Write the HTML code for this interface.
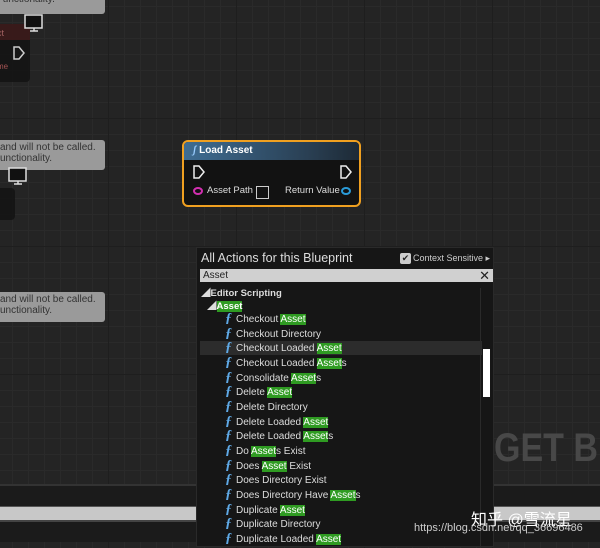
<!DOCTYPE html>
<html><head><meta charset="utf-8"><style>
*{margin:0;padding:0;box-sizing:border-box}
body{width:600px;height:542px;overflow:hidden;position:relative;background:#242424;font-family:"Liberation Sans","Noto Sans CJK SC",sans-serif;
background-image:linear-gradient(#1e1e1e 1px,transparent 1px),linear-gradient(90deg,#1e1e1e 1px,transparent 1px),linear-gradient(#2a2a2a 1px,transparent 1px),linear-gradient(90deg,#2a2a2a 1px,transparent 1px);
background-size:128px 128px,128px 128px,16px 16px,16px 16px;background-position:-20px -10px,-20px -10px,-4px 6px,-4px 6px}
.abs{position:absolute}
.cm{position:absolute;left:-5px;width:110px;background:#9a9a9a;border-radius:3px;color:#333;font-size:10px;line-height:11px;padding:2px 0 0 5px}
.node{position:absolute;background:#111;border-radius:4px;opacity:.95}
.panel{position:absolute;left:196px;top:247px;width:298px;height:300px;background:#161616;border:1px solid #2a2a2a}
.row{position:absolute;left:28px;height:14px;font-size:10px;color:#ddd;line-height:14px;white-space:nowrap}
.row i{font-family:"Liberation Serif",serif;color:#5fa9e6;font-size:14px;font-style:italic;font-weight:bold;margin-right:4px;display:inline-block;width:7px}
.g{background:#2f9b22;color:#fff}
</style></head><body>
<div class="cm" style="top:-8px;height:22px">&nbsp;unctionality.</div>
<div class="node" style="left:-5px;top:24px;width:35px;height:58px;background:#151515"><div style="background:#3a1a1a;height:16px;color:#a66;font-size:9px;padding:4px 0 0 2px">ct</div><div style="color:#a55;font-size:8px;margin-top:22px;padding-left:2px">me</div></div>
<svg class="abs" style="left:13px;top:46px" width="12" height="14"><path d="M1 1H6L11 7L6 13H1Z" fill="none" stroke="#ccc" stroke-width="1.5"/></svg>
<svg class="abs" style="left:22px;top:14px" width="22" height="20"><rect x="3" y="1" width="17" height="13" fill="#111" stroke="#ddd" stroke-width="1.5"/><path d="M8 17H16M12 14V17" stroke="#ddd" stroke-width="1.5"/></svg>
<div class="cm" style="top:140px;height:30px">and will not be called.<br>unctionality.</div>
<svg class="abs" style="left:6px;top:167px" width="22" height="20"><rect x="3" y="1" width="17" height="13" fill="#111" stroke="#ddd" stroke-width="1.5"/><path d="M8 17H16M12 14V17" stroke="#ddd" stroke-width="1.5"/></svg>
<div class="node" style="left:-5px;top:188px;width:20px;height:32px;background:#151515"></div>
<div class="cm" style="top:292px;height:30px">and will not be called.<br>unctionality.</div>
<div class="abs" style="left:182px;top:140px;width:179px;height:67px;border:2px solid #f0a020;border-radius:6px;background:#121212">
<div style="height:18px;background:linear-gradient(90deg,#3f6d93,#2a4054 70%,#1d2a36);border-radius:4px 4px 0 0;color:#fff;font-size:10px;font-weight:bold;line-height:18px;padding-left:9px"><i style="font-family:'Liberation Serif';color:#9cf">ʃ</i> Load Asset</div>
<svg class="abs" style="left:9px;top:23px" width="12" height="14"><path d="M1 1H6L11 7L6 13H1Z" fill="none" stroke="#eee" stroke-width="1.5"/></svg>
<svg class="abs" style="left:156px;top:23px" width="12" height="14"><path d="M1 1H6L11 7L6 13H1Z" fill="none" stroke="#eee" stroke-width="1.5"/></svg>
<div class="abs" style="left:9px;top:45px;width:10px;height:8px;border:2px solid #d22fb0;border-radius:50%"></div>
<div class="abs" style="left:23px;top:43px;font-size:9.5px;color:#ddd">Asset Path</div>
<div class="abs" style="left:72px;top:44px;width:13px;height:13px;border:1.5px solid #ccc"></div>
<div class="abs" style="left:101px;top:43px;font-size:9.5px;color:#ddd">Return Value</div>
<div class="abs" style="left:157px;top:45px;width:10px;height:8px;border:2px solid #2a9bd8;border-radius:50%"></div>
</div>
<div class="abs" style="left:494px;top:426px;font-size:40px;line-height:44px;font-weight:bold;color:#484848;white-space:nowrap;transform:scaleX(0.85);transform-origin:left">GET B</div>
<div class="abs" style="left:0;top:484px;width:600px;height:2px;background:#333"></div>
<div class="abs" style="left:0;top:486px;width:600px;height:20px;background:#1b1b1b"></div>
<div class="abs" style="left:0;top:506px;width:600px;height:16px;background:#c8c8c8;border-top:1px solid #555;border-bottom:2px solid #444"></div>
<div class="abs" style="left:0;top:522px;width:600px;height:20px;background:#1b1b1b"></div>
<div class="panel">
<div class="abs" style="left:4px;top:3px;font-size:12.5px;color:#ddd">All Actions for this Blueprint</div>
<div class="abs" style="left:203px;top:5px;width:11px;height:11px;background:#ccc;border-radius:2px;color:#222;font-size:9px;line-height:11px;text-align:center">✔</div>
<div class="abs" style="left:216px;top:5px;font-size:9px;color:#ccc;white-space:nowrap">Context Sensitive ▸</div>
<div class="abs" style="left:3px;top:21px;width:293px;height:13px;background:#d0d0d0;font-size:10px;color:#222;padding-left:3px;line-height:13px">Asset<span style="position:absolute;right:3px;font-size:13px">✕</span></div>
<div class="abs" style="left:4px;top:37px;font-size:9.5px;color:#ddd;font-weight:bold">◢Editor Scripting</div>
<div class="abs" style="left:10px;top:50px;font-size:9.5px;font-weight:bold;color:#ddd">◢<span class="g">Asset</span></div>
<div class="abs" style="left:3px;top:93px;width:282px;height:14px;background:#2c2c2c"></div>
<div class="abs" style="left:286px;top:101px;width:7px;height:48px;background:#fff"></div>
<div class="abs" style="left:283px;top:40px;width:1px;height:260px;background:#2a2a2a"></div>
<div class="row" style="top:64px"><i>ƒ</i>Checkout <span class="g">Asset</span></div>
<div class="row" style="top:79px"><i>ƒ</i>Checkout Directory</div>
<div class="row" style="top:93px"><i>ƒ</i>Checkout Loaded <span class="g">Asset</span></div>
<div class="row" style="top:108px"><i>ƒ</i>Checkout Loaded <span class="g">Asset</span>s</div>
<div class="row" style="top:123px"><i>ƒ</i>Consolidate <span class="g">Asset</span>s</div>
<div class="row" style="top:137px"><i>ƒ</i>Delete <span class="g">Asset</span></div>
<div class="row" style="top:152px"><i>ƒ</i>Delete Directory</div>
<div class="row" style="top:167px"><i>ƒ</i>Delete Loaded <span class="g">Asset</span></div>
<div class="row" style="top:181px"><i>ƒ</i>Delete Loaded <span class="g">Asset</span>s</div>
<div class="row" style="top:196px"><i>ƒ</i>Do <span class="g">Asset</span>s Exist</div>
<div class="row" style="top:211px"><i>ƒ</i>Does <span class="g">Asset</span> Exist</div>
<div class="row" style="top:225px"><i>ƒ</i>Does Directory Exist</div>
<div class="row" style="top:240px"><i>ƒ</i>Does Directory Have <span class="g">Asset</span>s</div>
<div class="row" style="top:255px"><i>ƒ</i>Duplicate <span class="g">Asset</span></div>
<div class="row" style="top:269px"><i>ƒ</i>Duplicate Directory</div>
<div class="row" style="top:284px"><i>ƒ</i>Duplicate Loaded <span class="g">Asset</span></div>
</div>
<div class="abs" style="left:471px;top:506px;font-size:16px;color:#fff;white-space:nowrap">知乎 @雪流星</div>
<div class="abs" style="left:414px;top:522px;font-size:11px;color:#ccc;white-space:nowrap">https://blog.csdn.net/qq_36696486</div>
</body></html>
